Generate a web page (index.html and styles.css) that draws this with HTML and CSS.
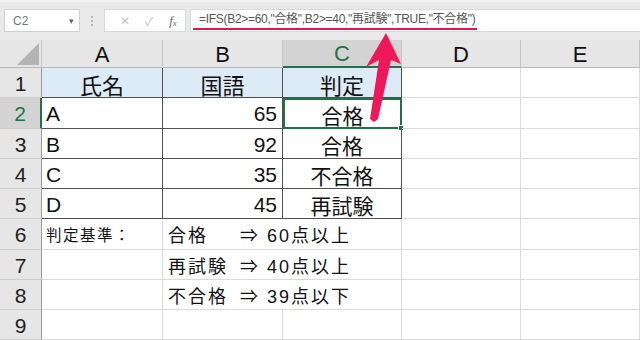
FILE: index.html
```html
<!DOCTYPE html>
<html lang="ja">
<head>
<meta charset="utf-8">
<link rel="stylesheet" href="styles.css">
</head>
<body>
<div class="app">
  <div class="toolbar">
    <div class="namebox"><span class="nb-text">C2</span><span class="nb-arrow">▾</span></div>
    <div class="grip"><span></span><span></span><span></span></div>
    <div class="fnbox">
      <span class="fn-btn x">✕</span>
      <span class="fn-btn ok">✓</span>
      <span class="fn-btn fx">f<sub>x</sub></span>
    </div>
    <div class="formula"><span class="ftext">=IFS(B2&gt;=60,"合格",B2&gt;=40,"再試験",TRUE,"不合格")</span></div>
  </div>
  <div class="sheet">
    <div class="ch corner"><span class="tri"></span></div>
    <div class="ch">A</div>
    <div class="ch">B</div>
    <div class="ch sel">C</div>
    <div class="ch">D</div>
    <div class="ch">E</div>

    <div class="rh">1</div>
    <div class="c t hd tl">氏名</div>
    <div class="c t hd">国語</div>
    <div class="c t hd tr">判定</div>
    <div class="c"></div>
    <div class="c"></div>

    <div class="rh sel">2</div>
    <div class="c t left">A</div>
    <div class="c t right">65</div>
    <div class="c t mid active">合格<span class="handle"></span></div>
    <div class="c"></div>
    <div class="c"></div>

    <div class="rh">3</div>
    <div class="c t left">B</div>
    <div class="c t right">92</div>
    <div class="c t mid tr">合格</div>
    <div class="c"></div>
    <div class="c"></div>

    <div class="rh">4</div>
    <div class="c t left">C</div>
    <div class="c t right">35</div>
    <div class="c t mid tr">不合格</div>
    <div class="c"></div>
    <div class="c"></div>

    <div class="rh">5</div>
    <div class="c t left bot">D</div>
    <div class="c t right bot">45</div>
    <div class="c t mid tr bot">再試験</div>
    <div class="c"></div>
    <div class="c"></div>

    <div class="rh">6</div>
    <div class="c small">判定基準：</div>
    <div class="c over"><span class="rule"><span class="rk">合格</span><span class="ar">⇒</span>60点以上</span></div>
    <div class="c"></div>
    <div class="c"></div>
    <div class="c"></div>

    <div class="rh">7</div>
    <div class="c"></div>
    <div class="c over"><span class="rule"><span class="rk">再試験</span><span class="ar">⇒</span>40点以上</span></div>
    <div class="c"></div>
    <div class="c"></div>
    <div class="c"></div>

    <div class="rh">8</div>
    <div class="c"></div>
    <div class="c over"><span class="rule"><span class="rk">不合格</span><span class="ar">⇒</span>39点以下</span></div>
    <div class="c"></div>
    <div class="c"></div>
    <div class="c"></div>

    <div class="rh">9</div>
    <div class="c"></div>
    <div class="c"></div>
    <div class="c"></div>
    <div class="c"></div>
    <div class="c"></div>
  </div>
  <svg class="arrow" width="640" height="340" viewBox="0 0 640 340">
    <polygon points="386,33 401,64 391,60 378,119 374,122 370,119 379,60 366,67" fill="#ef175a"/>
  </svg>
</div>
</body>
</html>
```

FILE: styles.css
```css
* { box-sizing: border-box; }
html, body { margin: 0; padding: 0; }
body {
  width: 640px;
  height: 340px;
  overflow: hidden;
  background: #fff;
  font-family: "Liberation Sans", "Noto Sans CJK JP", sans-serif;
}
.app { position: relative; width: 640px; height: 340px; overflow: hidden; }

.toolbar {
  height: 40px;
  background: #e9e9e9;
  border-top: 2px solid #f2f2f2;
  display: flex;
  align-items: flex-start;
  padding: 7px 0 0 4px;
}
.namebox {
  width: 76px;
  height: 23px;
  background: #fff;
  border: 1px solid #d0d0d0;
  display: flex;
  align-items: center;
  justify-content: space-between;
  padding: 0 5px 0 8px;
}
.nb-text { font-size: 12px; color: #777; }
.nb-arrow { font-size: 9px; color: #666; }
.grip {
  width: 24px;
  height: 23px;
  display: flex;
  flex-direction: column;
  align-items: center;
  justify-content: center;
  gap: 2px;
}
.grip span { width: 2px; height: 2px; background: #b5b5b5; }
.fnbox {
  width: 82px;
  height: 23px;
  background: #fff;
  border: 1px solid #d8d8d8;
  display: flex;
  align-items: center;
  padding: 0 0 0 8px;
}
.fn-btn { color: #c4c4c4; font-size: 12px; width: 28px; text-align: center; }
.fn-btn.fx {
  color: #666;
  font-family: "Liberation Serif", serif;
  font-style: italic;
  font-size: 13px;
}
.fn-btn.fx sub { font-size: 9px; vertical-align: -1px; }
.formula {
  margin-left: 4px;
  flex: 1;
  height: 23px;
  background: #fff;
  border: 1px solid #d8d8d8;
  border-right: none;
  padding: 0 0 0 2px;
  display: flex;
  align-items: flex-start;
}
.ftext {
  font-size: 12px;
  color: #555;
  line-height: 17px;
  padding: 1px 2px 0 6px;
  border-bottom: 2px solid #e0164f;
  white-space: nowrap;
  letter-spacing: -0.3px;
}

.sheet {
  display: grid;
  grid-template-columns: 42px 121px 120px 119px 119px 119px;
  grid-template-rows: 28px 30px 31px 30px 30px 30px 31px 30px 30px 30px;
}
.ch {
  background: #e6e6e6;
  border-right: 1px solid #c6c6c6;
  border-bottom: 1px solid #b8b8b8;
  display: flex;
  align-items: center;
  justify-content: center;
  font-size: 22px;
  color: #111;
  padding-top: 2px;
}
.ch.sel {
  background: #d3d3d3;
  color: #217346;
  border-bottom: 2px solid #217346;
}
.corner { position: relative; background: #e6e6e6; }
.tri {
  position: absolute;
  right: 2px;
  bottom: 2px;
  width: 0; height: 0;
  border-left: 22px solid transparent;
  border-bottom: 22px solid #b4b4b4;
}
.rh {
  background: #e6e6e6;
  border-right: 1px solid #9c9c9c;
  border-bottom: 1px solid #cfcfcf;
  display: flex;
  align-items: center;
  justify-content: center;
  font-size: 21px;
  color: #222;
  padding-top: 2px;
}
.rh.sel {
  background: #d3d3d3;
  color: #217346;
  border-right: 2px solid #217346;
}
.c {
  border-right: 1px solid #dadada;
  border-bottom: 1px solid #dadada;
  display: flex;
  align-items: center;
  font-size: 21px;
  color: #111;
  white-space: nowrap;
  position: relative;
  padding-top: 2px;
}
.c.t { border-right: 1px solid #505050; border-bottom: 1px solid #505050; }
.c.hd { background: #ddebf7; justify-content: center; font-size: 22px; }
.c.left { padding-left: 4px; }
.c.right { justify-content: flex-end; padding-right: 5px; }
.c.mid { justify-content: center; }
.c.active {
  border: 2px solid #217346;
}
.handle {
  position: absolute;
  right: -4px;
  bottom: -4px;
  width: 6px;
  height: 6px;
  background: #217346;
  border: 1px solid #fff;
}
.c.small { font-size: 15.5px; letter-spacing: 1.5px; padding-left: 4px; padding-top: 0; }
.c.over { border-right: none; overflow: visible; z-index: 1; padding-left: 5px; padding-top: 0; }
.rule { font-size: 18px; letter-spacing: 2px; display: flex; align-items: center; }
.rk { display: inline-block; width: 72px; }
.ar { display: inline-block; width: 27px; letter-spacing: 0; }

.arrow { position: absolute; left: 0; top: 0; pointer-events: none; }
```
